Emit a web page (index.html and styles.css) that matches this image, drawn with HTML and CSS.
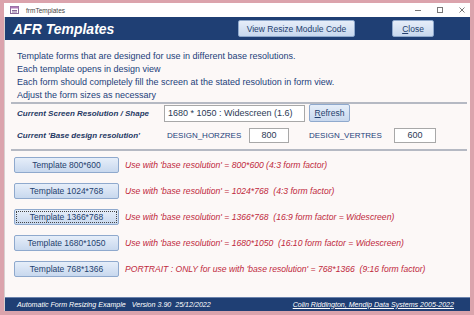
FILE: index.html
```html
<!DOCTYPE html>
<html>
<head>
<meta charset="utf-8">
<title>frmTemplates</title>
<link rel="stylesheet" href="styles.css">
</head>
<body>
<div class="frame">
  <div class="titlebar">
    <svg class="appicon" width="9" height="8" viewBox="0 0 9 8">
      <rect x="0.5" y="0.5" width="8" height="7" fill="#fff" stroke="#8a6a9a"/>
      <rect x="0.5" y="0.5" width="8" height="2" fill="#b07ab8"/>
      <line x1="2" y1="4.5" x2="7" y2="4.5" stroke="#8a6a9a"/>
      <line x1="2" y1="6" x2="7" y2="6" stroke="#8a6a9a"/>
    </svg>
    <span class="title">frmTemplates</span>
    <div class="controls">
      <svg width="8" height="8" viewBox="0 0 8 8"><line x1="1" y1="4.5" x2="7" y2="4.5" stroke="#777"/></svg>
      <svg width="8" height="8" viewBox="0 0 8 8"><rect x="1.5" y="1.5" width="5" height="5" fill="none" stroke="#777"/></svg>
      <svg width="8" height="8" viewBox="0 0 8 8"><path d="M1.5 1.5L6.5 6.5M6.5 1.5L1.5 6.5" stroke="#777"/></svg>
    </div>
  </div>
  <div class="form">
    <header class="header">
      <h1 class="heading">AFR Templates</h1>
      <button class="btn btn-code">View Resize Module Code</button>
      <button class="btn btn-close"><u>C</u>lose</button>
    </header>
    <div class="intro">
      <p>Template forms that are designed for use in different base resolutions.</p>
      <p>Each template opens in design view</p>
      <p>Each form should completely fill the screen at the stated resolution in form view.</p>
      <p>Adjust the form sizes as necessary</p>
    </div>
    <div class="sep"></div>
    <div class="info">
      <div class="row row1">
        <span class="label">Current Screen Resolution / Shape</span>
        <span class="field wide">1680 * 1050 : Widescreen (1.6)</span>
        <button class="btn btn-refresh"><u>R</u>efresh</button>
      </div>
      <div class="row row2">
        <span class="label">Current 'Base design resolution'</span>
        <span class="cap cap-h">DESIGN_HORZRES</span>
        <span class="field num n1">800</span>
        <span class="cap cap-v">DESIGN_VERTRES</span>
        <span class="field num n2">600</span>
      </div>
    </div>
    <div class="sep sep2"></div>
    <div class="templates">
      <div class="trow"><button class="btn tbtn">Template 800*600</button><span class="note">Use with 'base resolution' = 800*600 (4:3 form factor)</span></div>
      <div class="trow"><button class="btn tbtn">Template 1024*768</button><span class="note">Use with 'base resolution' = 1024*768&nbsp; (4:3 form factor)</span></div>
      <div class="trow"><button class="btn tbtn focus">Template 1366*768</button><span class="note">Use with 'base resolution' = 1366*768&nbsp; (16:9 form factor = Widescreen)</span></div>
      <div class="trow"><button class="btn tbtn">Template 1680*1050</button><span class="note">Use with 'base resolution' = 1680*1050&nbsp; (16:10 form factor = Widescreen)</span></div>
      <div class="trow"><button class="btn tbtn">Template 768*1366</button><span class="note">PORTRAIT : ONLY for use with 'base resolution' = 768*1366&nbsp; (9:16 form factor)</span></div>
    </div>
    <footer class="footer">
      <span class="foot-left">Automatic Form Resizing Example&nbsp;&nbsp; Version 3.90&nbsp; 25/12/2022</span>
      <span class="foot-right">Colin Riddington, Mendip Data Systems 2005-2022</span>
    </footer>
  </div>
</div>
</body>
</html>
```

FILE: styles.css
```css
* { box-sizing: border-box; }
html, body { margin: 0; padding: 0; }
body {
  width: 474px;
  height: 315px;
  overflow: hidden;
  font-family: "Liberation Sans", Arial, sans-serif;
}
.frame {
  width: 474px;
  height: 315px;
  background: #dba3ac;
  padding: 3px 4px 4px 4px;
  display: flex;
  flex-direction: column;
}
.titlebar {
  height: 14px;
  background: #ffffff;
  display: flex;
  align-items: center;
  padding-left: 6px;
}
.appicon { display: block; }
.title {
  font-size: 6.5px;
  color: #444;
  margin-left: 7px;
}
.controls {
  margin-left: auto;
  display: flex;
  gap: 14px;
  padding-right: 4px;
}
.controls svg { display: block; }
.form {
  flex: 1;
  background: #fcf8f7;
  display: flex;
  flex-direction: column;
  border-left: 1px solid #d8d0d0;
}
.header {
  height: 23px;
  background: #1f3f74;
  display: flex;
  align-items: center;
}
.heading {
  margin: 0;
  width: 233px;
  padding-left: 8px;
  font-size: 14px;
  font-weight: bold;
  font-style: italic;
  color: #ffffff;
}
.btn {
  font-family: "Liberation Sans", Arial, sans-serif;
  background: linear-gradient(#e6eef9, #c8d8ee);
  border: 1px solid #8fa9cd;
  border-radius: 2px;
  color: #243f6e;
  font-size: 8.5px;
  padding: 0;
  margin: 0;
  display: flex;
  align-items: center;
  justify-content: center;
}
.btn-code { width: 117px; height: 17px; }
.btn-close { width: 42px; height: 17px; margin-left: 37px; }
.intro {
  margin-top: 10px;
  padding-left: 12px;
}
.intro p {
  margin: 0;
  font-size: 9px;
  line-height: 13px;
  color: #23407a;
}
.sep {
  height: 2px;
  background: #b5b9c3;
  margin: 0 3px 0 6px;
}
.info {
  padding-left: 12px;
}
.row {
  display: flex;
  align-items: center;
}
.row1 { height: 18px; }
.row2 { height: 16px; margin-top: 5px; }
.label {
  width: 147px;
  font-size: 8px;
  font-weight: bold;
  font-style: italic;
  color: #1f3864;
  white-space: nowrap;
}
.field {
  background: #ffffff;
  border: 1px solid #a8a8a8;
  font-size: 9px;
  color: #2c3a55;
  height: 17px;
  display: flex;
  align-items: center;
}
.wide { width: 141px; padding-left: 3px; white-space: nowrap; overflow: hidden; }
.btn-refresh { width: 41px; height: 18px; margin-left: 4px; }
.cap {
  font-size: 8px;
  color: #23407a;
  white-space: nowrap;
}
.cap-h { width: 82px; margin-left: 3px; }
.num { justify-content: center; height: 15px; }
.n1 { width: 40px; }
.cap-v { margin-left: 20px; width: 85px; }
.n2 { width: 42px; }
.sep2 { margin-top: 6px; }
.templates {
  padding-left: 9px;
  margin-top: 6px;
  display: flex;
  flex-direction: column;
  gap: 10px;
}
.trow {
  display: flex;
  align-items: center;
  height: 16px;
}
.tbtn { width: 105px; height: 16px; font-size: 8.5px; }
.focus { outline: 1px dotted #444; outline-offset: -3px; }
.note {
  margin-left: 6px;
  font-size: 8.6px;
  font-style: italic;
  color: #c0283c;
  white-space: nowrap;
}
.footer {
  margin-top: auto;
  height: 14px;
  background: #1f3f74;
  border-top: 1px solid #6c84ad;
  display: flex;
  align-items: center;
  padding: 0 16px 0 12px;
  color: #ffffff;
  font-size: 7.1px;
  font-style: italic;
}
.foot-right {
  margin-left: auto;
  text-decoration: underline;
}
```
